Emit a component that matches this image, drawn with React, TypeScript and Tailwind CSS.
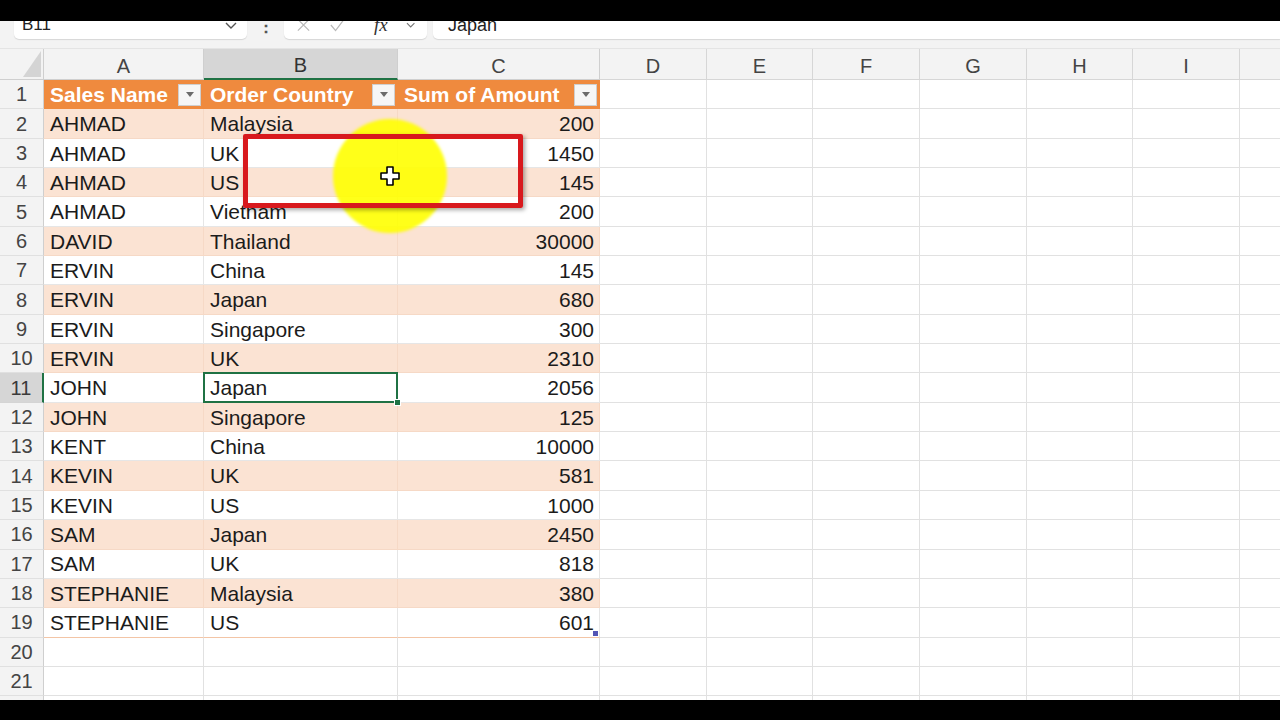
import React from "react"

type Row = [string, string, string]

const data: Row[] = [
  ["AHMAD", "Malaysia", "200"],
  ["AHMAD", "UK", "1450"],
  ["AHMAD", "US", "145"],
  ["AHMAD", "Vietnam", "200"],
  ["DAVID", "Thailand", "30000"],
  ["ERVIN", "China", "145"],
  ["ERVIN", "Japan", "680"],
  ["ERVIN", "Singapore", "300"],
  ["ERVIN", "UK", "2310"],
  ["JOHN", "Japan", "2056"],
  ["JOHN", "Singapore", "125"],
  ["KENT", "China", "10000"],
  ["KEVIN", "UK", "581"],
  ["KEVIN", "US", "1000"],
  ["SAM", "Japan", "2450"],
  ["SAM", "UK", "818"],
  ["STEPHANIE", "Malaysia", "380"],
  ["STEPHANIE", "US", "601"],
]

const extraCols = [
  { key: "D", w: "w-[107px]" },
  { key: "E", w: "w-[106px]" },
  { key: "F", w: "w-[107px]" },
  { key: "G", w: "w-[107px]" },
  { key: "H", w: "w-[106px]" },
  { key: "I", w: "w-[107px]" },
  { key: "J", w: "w-[107px]" },
]

function FilterButton() {
  return (
    <div className="w-[23px] h-[22px] bg-[#f6f6f6] border border-[#cfcfcf] flex items-center justify-center shrink-0">
      <div className="w-0 h-0 border-l-[4px] border-r-[4px] border-t-[5px] border-l-transparent border-r-transparent border-t-[#6b6b6b]" />
    </div>
  )
}

function RowHeader({ n, active }: { n: number; active?: boolean }) {
  return (
    <div
      className={
        active
          ? "w-[44px] shrink-0 h-full flex items-center justify-center bg-[#d6d6d6] border-r-2 border-r-[#1f7244] border-b border-b-[#d4d4d4] text-[20px] text-[#3a3a3a]"
          : "w-[44px] shrink-0 h-full flex items-center justify-center bg-[#f3f3f3] border-r border-r-[#cfcfcf] border-b border-b-[#e0e0e0] text-[20px] text-[#444]"
      }
    >
      {n}
    </div>
  )
}

function EmptyCells() {
  return (
    <>
      {extraCols.map((c) => (
        <div key={c.key} className={`${c.w} shrink-0 h-full border-r border-b border-[#e1e1e1] bg-white`} />
      ))}
    </>
  )
}

export default function App() {
  return (
    <div className="w-[1280px] h-[720px] bg-black flex flex-col overflow-hidden" style={{ fontFamily: '"Liberation Sans", Arial, sans-serif' }}>
      <div className="h-[21px] shrink-0 bg-black" />

      {/* Excel area */}
      <div className="relative h-[679px] shrink-0 bg-white overflow-hidden">
        {/* Formula bar (top cut off by the video frame) */}
        <div className="-mt-[12px] h-[39px] bg-[#f3f3f3] flex items-start pt-[2px] pl-[14px]">
          <div className="w-[233px] h-[28px] bg-white rounded-[5px] shadow-[0_1px_1px_rgba(0,0,0,0.12)] flex items-center justify-between px-[8px]">
            <span className="text-[17px] text-[#222]">B11</span>
            <svg width="16" height="16" viewBox="0 0 16 16" fill="none" stroke="#555" strokeWidth="1.4">
              <path d="M3 6l5 5 5-5" />
            </svg>
          </div>
          <div className="w-[37px] h-[28px] flex items-center justify-center text-[#555] text-[18px] font-bold">⋮</div>
          <div className="w-[143px] h-[28px] bg-white rounded-[5px] shadow-[0_1px_1px_rgba(0,0,0,0.12)] flex items-center px-[12px] gap-[18px]">
            <svg width="16" height="16" viewBox="0 0 16 16" fill="none" stroke="#b9b9b9" strokeWidth="1.3">
              <path d="M2 2l12 12M14 2L2 14" />
            </svg>
            <svg width="18" height="16" viewBox="0 0 18 16" fill="none" stroke="#b9b9b9" strokeWidth="1.3">
              <path d="M2 8l5 6L16 2" />
            </svg>
            <span className="ml-[10px] text-[19px] italic text-[#333]" style={{ fontFamily: '"Liberation Serif", serif' }}>
              fx
            </span>
            <svg width="10" height="10" viewBox="0 0 10 10" fill="none" stroke="#777" strokeWidth="1.2">
              <path d="M1 3l4 4 4-4" />
            </svg>
          </div>
          <div className="ml-[6px] flex-1 h-[28px] bg-white rounded-l-[5px] shadow-[0_1px_1px_rgba(0,0,0,0.12)] flex items-center pl-[15px]">
            <span className="text-[18px] text-[#222]">Japan</span>
          </div>
        </div>

        {/* Column headers */}
        <div className="flex h-[32px] bg-[#f3f3f3] border-t border-[#e4e4e4]">
          <div className="w-[44px] shrink-0 h-full border-r border-b border-[#cfcfcf] flex items-end justify-end pr-[2px] pb-[2px]">
            <svg width="18" height="26" viewBox="0 0 18 26" className="block">
              <path d="M18 0L18 26L0 26Z" fill="#d4d4d4" />
            </svg>
          </div>
          <div className="w-[160px] shrink-0 h-full border-r border-b border-[#cfcfcf] flex items-center justify-center pt-[3px] text-[20px] text-[#444]">A</div>
          <div className="w-[194px] shrink-0 h-full bg-[#d6d6d6] border-r border-r-[#cfcfcf] border-b-2 border-b-[#1f7244] flex items-center justify-center pt-[3px] text-[20px] text-[#333]">B</div>
          <div className="w-[202px] shrink-0 h-full border-r border-b border-[#cfcfcf] flex items-center justify-center pt-[3px] text-[20px] text-[#444]">C</div>
          {extraCols.map((c) => (
            <div key={c.key} className={`${c.w} shrink-0 h-full border-r border-b border-[#d6d6d6] flex items-center justify-center pt-[3px] text-[20px] text-[#444]`}>
              {c.key === "J" ? "" : c.key}
            </div>
          ))}
        </div>

        {/* Row 1: table header */}
        <div className="flex h-[29.35px]">
          <RowHeader n={1} />
          <div className="w-[160px] shrink-0 h-full bg-[#ef8a3e] flex items-center justify-between pl-[6px] pr-[3px]">
            <span className="text-[21px] font-bold text-white">Sales Name</span>
            <FilterButton />
          </div>
          <div className="w-[194px] shrink-0 h-full bg-[#ef8a3e] flex items-center justify-between pl-[6px] pr-[3px]">
            <span className="text-[21px] font-bold text-white">Order Country</span>
            <FilterButton />
          </div>
          <div className="w-[202px] shrink-0 h-full bg-[#ef8a3e] flex items-center justify-between pl-[6px] pr-[3px]">
            <span className="text-[21px] font-bold text-white">Sum of Amount</span>
            <FilterButton />
          </div>
          <EmptyCells />
        </div>

        {/* Data rows */}
        {data.map((r, i) => {
          const n = i + 2
          const peach = n % 2 === 0
          const bg = peach ? "bg-[#fbe3d3] border-[#f6d9c6]" : "bg-white border-[#e6e6e6]"
          const last = n === 19
          const bottom = last ? "border-b-[#f3c5a6]" : ""
          const selected = n === 11
          return (
            <div key={n} className="flex h-[29.35px]">
              <RowHeader n={n} active={selected} />
              <div className={`w-[160px] shrink-0 h-full ${bg} ${bottom} border-b border-r flex items-center pl-[6px] pt-[1px] text-[21px] text-[#1b1b1b]`}>
                {r[0]}
              </div>
              <div className={`relative w-[194px] shrink-0 h-full ${bg} ${bottom} border-b border-r flex items-center pl-[6px] pt-[1px] text-[21px] text-[#1b1b1b]`}>
                {r[1]}
                {selected && (
                  <>
                    <div className="absolute z-10 -left-[1px] -top-[1px] -right-[1px] -bottom-[1px] border-2 border-[#1f7244]" />
                    <div className="absolute z-10 -right-[4px] -bottom-[4px] w-[7px] h-[7px] bg-[#1f7244] border border-white" />
                  </>
                )}
              </div>
              <div className={`relative w-[202px] shrink-0 h-full ${bg} ${bottom} border-b border-r flex items-center justify-end pr-[5px] pt-[1px] text-[21px] text-[#1b1b1b]`}>
                {r[2]}
                {last && <div className="absolute right-[1px] bottom-[1px] w-[5px] h-[5px] bg-[#5355b5]" />}
              </div>
              <EmptyCells />
            </div>
          )
        })}

        {/* Empty rows 20-22 */}
        {[20, 21, 22].map((n) => (
          <div key={n} className="flex h-[29.35px]">
            <RowHeader n={n} />
            <div className="w-[160px] shrink-0 h-full border-r border-b border-[#e1e1e1]" />
            <div className="w-[194px] shrink-0 h-full border-r border-b border-[#e1e1e1]" />
            <div className="w-[202px] shrink-0 h-full border-r border-b border-[#e1e1e1]" />
            <EmptyCells />
          </div>
        ))}

        {/* Highlight circle */}
        <div className="absolute z-20 left-[333px] top-[98px] w-[114px] h-[114px] rounded-full bg-[#ffff00]/90 blur-[1.5px]" />

        {/* Red box */}
        <div className="absolute z-20 left-[243px] top-[113px] w-[280px] h-[74px] border-[5px] border-[#d8191d] rounded-[2px] shadow-[2px_2px_4px_rgba(0,0,0,0.35)]" />

        {/* Cursor */}
        <svg className="absolute z-20 left-[380px] top-[145px]" width="20" height="20" viewBox="0 0 20 20">
          <path d="M7 1h6v6h6v6h-6v6H7v-6H1V7h6z" fill="#fff" stroke="#000" strokeWidth="1.6" strokeLinejoin="round" />
        </svg>
      </div>

      <div className="flex-1 bg-black" />
    </div>
  )
}
